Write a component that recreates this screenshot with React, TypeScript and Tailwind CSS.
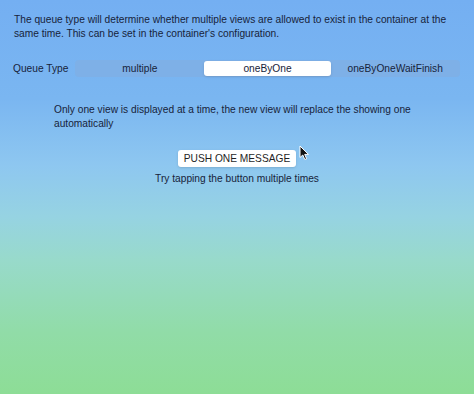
import React from 'react';

const options = ['multiple', 'oneByOne', 'oneByOneWaitFinish'];

const App: React.FC = () => {
  const selected = 'oneByOne';

  return (
    <div
      className="relative w-[474px] h-[394px] overflow-hidden text-[10.2px] leading-[13.5px] text-[#17233a] bg-[linear-gradient(180deg,#74aff2_0%,#7ab6f1_25%,#8ec7f0_42%,#96d3e2_55%,#98dacb_66%,#91dca8_84%,#8ddd96_100%)]"
      style={{ fontFamily: '"Liberation Sans", Arial, sans-serif' }}
    >
      <p className="pt-[13px] px-[14px]">
        The queue type will determine whether multiple views are allowed to exist in the container at the
        same time. This can be set in the container&apos;s configuration.
      </p>

      <div className="flex items-center mt-[20px] pl-[13px]">
        <span className="w-[62px]">Queue Type</span>
        <div className="flex w-[385px] h-[17px] rounded-[4px] bg-[#7eb0e7] p-[1px]">
          {options.map(opt => (
            <div
              key={opt}
              className={
                opt === selected
                  ? 'flex-1 flex items-center justify-center rounded-[3px] bg-white shadow-sm'
                  : 'flex-1 flex items-center justify-center'
              }
            >
              {opt}
            </div>
          ))}
        </div>
      </div>

      <p className="mt-[26px] pl-[54px] pr-[60px]">
        Only one view is displayed at a time, the new view will replace the showing one automatically
      </p>

      <div className="flex flex-col items-center mt-[20px]">
        <button className="h-[17px] px-[6px] rounded-[3px] bg-white shadow-sm text-[#1f1f1f] leading-[17px]">
          PUSH ONE MESSAGE
        </button>
        <span className="mt-[5px]">Try tapping the button multiple times</span>
      </div>

      <svg className="absolute left-[299px] top-[145px]" width="12" height="16" viewBox="0 0 12 16">
        <path d="M1 1 L1 12.5 L3.8 10 L5.8 14.5 L7.6 13.7 L5.7 9.4 L9.5 9.4 Z" fill="#111" stroke="#fff" strokeWidth="1" />
      </svg>
    </div>
  );
};

export default App;
